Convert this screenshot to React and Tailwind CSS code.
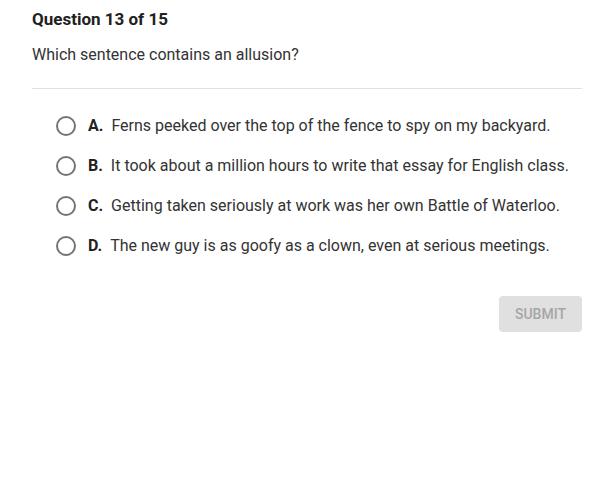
import { useState } from 'react'

const options = [
  { letter: 'A.', text: 'Ferns peeked over the top of the fence to spy on my backyard.' },
  { letter: 'B.', text: 'It took about a million hours to write that essay for English class.' },
  { letter: 'C.', text: 'Getting taken seriously at work was her own Battle of Waterloo.' },
  { letter: 'D.', text: 'The new guy is as goofy as a clown, even at serious meetings.' },
]

export default function App() {
  const [picked, setPicked] = useState(null)

  return (
    <div className="w-[597px] h-[492px] bg-white pl-8 pr-[15px] pt-[9px] text-[#212121]" style={{ fontFamily: 'Roboto, "Liberation Sans", sans-serif' }}>
      <h1 className="text-[17px] leading-5 font-bold">Question 13 of 15</h1>
      <p className="mt-[16px] text-[16px] leading-5 text-[#333]">Which sentence contains an allusion?</p>
      <div className="mt-[23px] border-t border-[#e0e0e0]" />

      <div className="pt-[27px] pl-6 flex flex-col gap-[20px]">
        {options.map((o, i) => (
          <label key={o.letter} className="flex items-center cursor-pointer" onClick={() => setPicked(i)}>
            <span className="w-5 h-5 rounded-full border-2 border-[#757575] flex items-center justify-center shrink-0">
              {picked === i && <span className="w-2.5 h-2.5 rounded-full bg-[#757575]" />}
            </span>
            <span className="ml-3 text-[16px] leading-5 font-bold text-[#212121]">{o.letter}</span>
            <span className="ml-2 text-[16px] leading-5 text-[#333]">{o.text}</span>
          </label>
        ))}
      </div>

      <div className="flex justify-end mt-[40px]">
        <button className="w-[83px] h-9 rounded bg-[#e0e0e0] text-[#a6a6a6] text-[14px] font-medium">
          SUBMIT
        </button>
      </div>
    </div>
  )
}
